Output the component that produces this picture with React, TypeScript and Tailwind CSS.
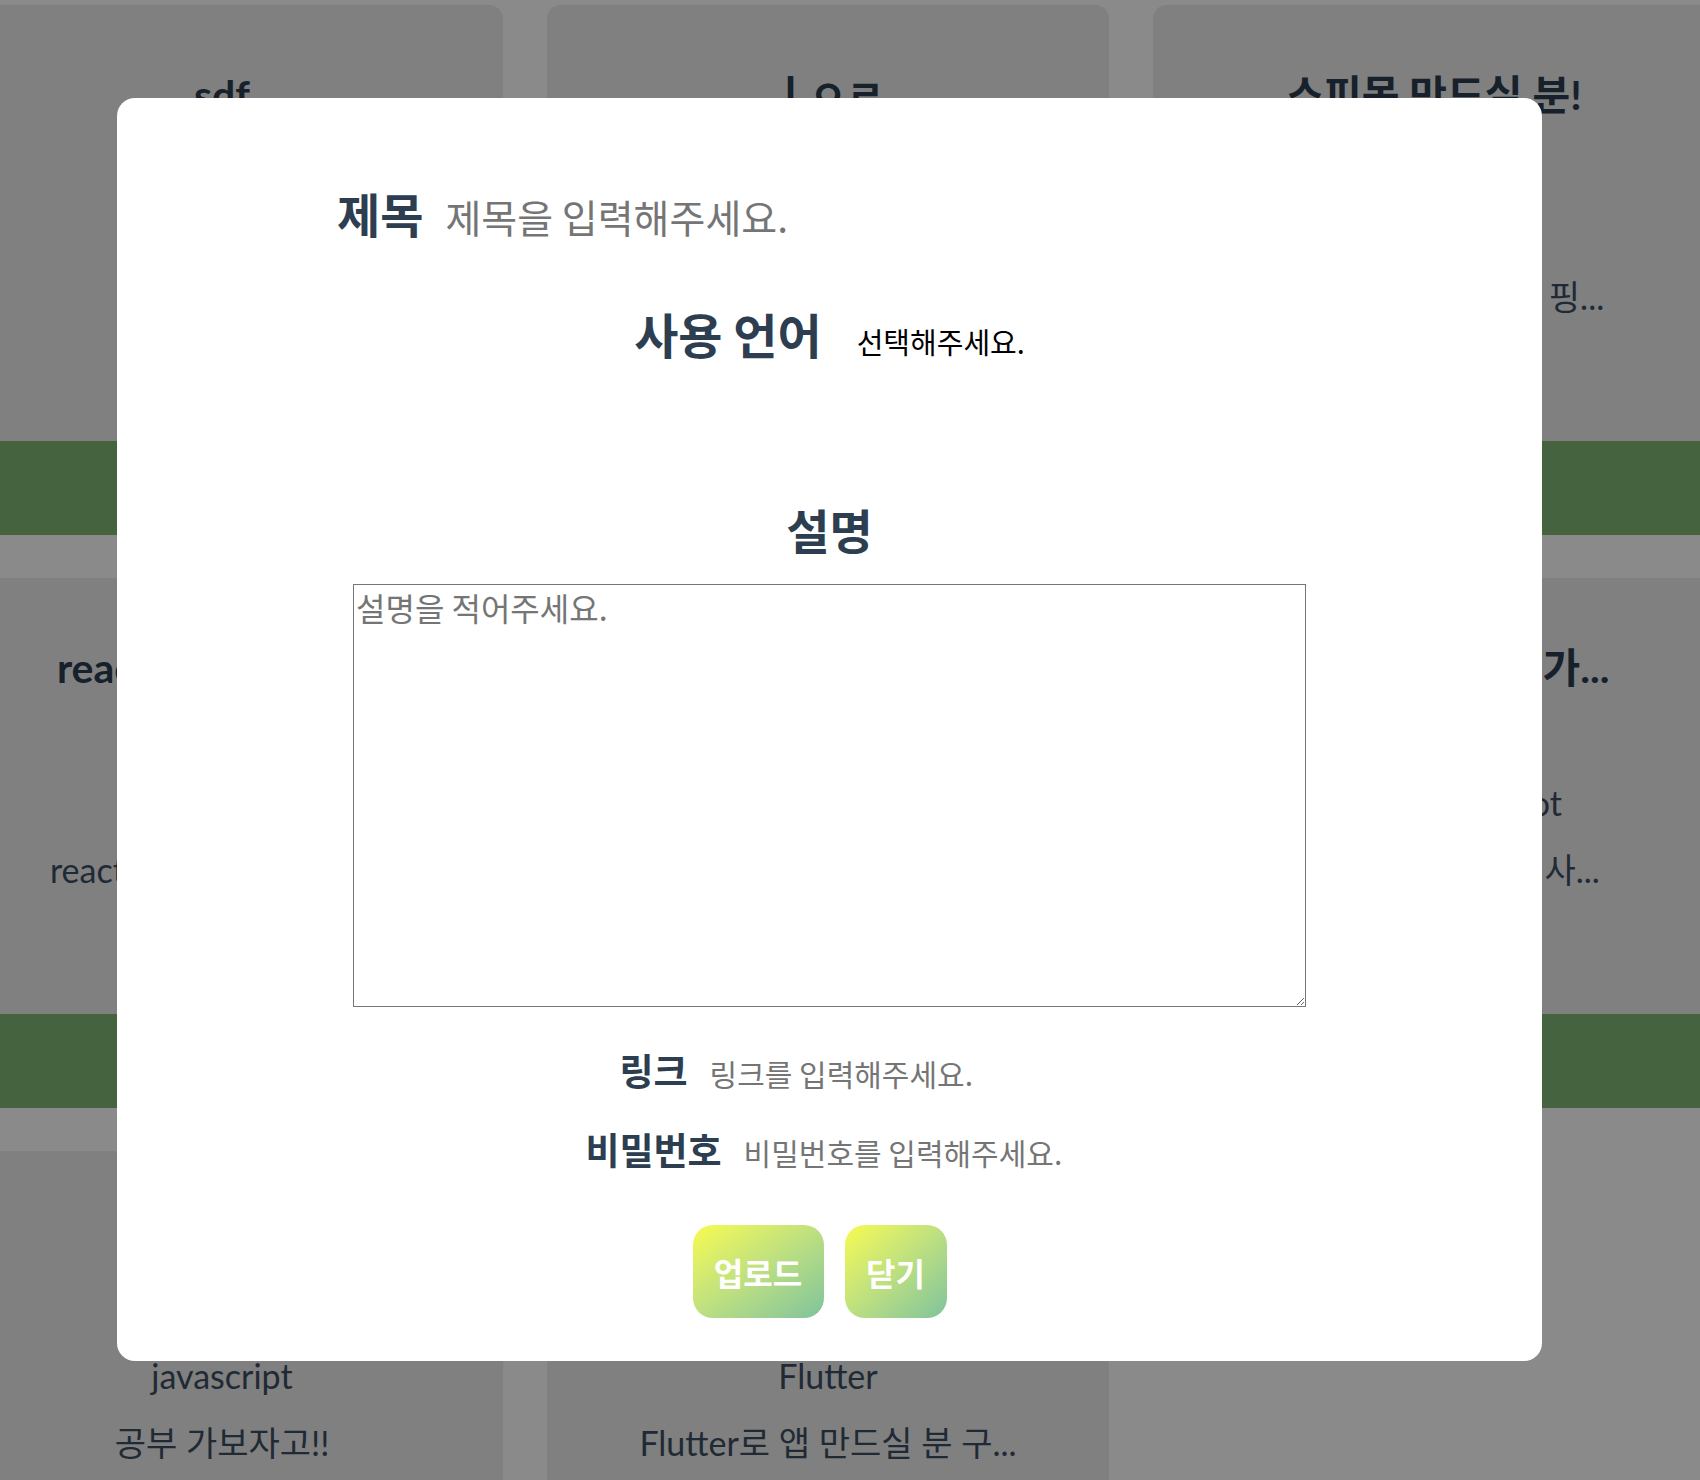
import * as React from 'react';

type CardData = { title: string; lang: string; desc: string };

// 모달에 가려진 카드 내용은 비워둔다
const rows: CardData[][] = [
  [
    { title: 'sdf', lang: '', desc: '' },
    { title: 'ㅣㅇㄹ', lang: '', desc: '' },
    { title: '스피몽 만드실 분!', lang: '', desc: '같이 만들어 보실 분 핑...' },
  ],
  [
    { title: 'react 스터디 구함...', lang: '', desc: 'react 같이 공부하실 분...' },
    { title: '', lang: '', desc: '' },
    { title: '알고리즘 스터디 가...', lang: 'Java, Spring Boot', desc: '백엔드 공부하실 분 사...' },
  ],
  [
    { title: '', lang: 'javascript', desc: '공부 가보자고!!' },
    { title: '', lang: 'Flutter', desc: 'Flutter로 앱 만드실 분 구...' },
  ],
];

function Card({ title, lang, desc }: CardData) {
  return (
    <div className="flex h-[530px] w-[562px] shrink-0 flex-col overflow-hidden rounded-[14px] bg-[#808080] text-center">
      <div className="flex flex-1 flex-col items-center">
        <h3 className="mt-[65px] h-[50px] whitespace-nowrap text-[41px] font-bold leading-[50px] text-[#17212b]">{title}</h3>
        <p className="mt-[88px] h-[44px] whitespace-nowrap text-[34px] leading-[44px] text-[#1f2a35]">{lang}</p>
        <p className="mt-[23px] h-[44px] whitespace-nowrap text-[34px] leading-[44px] text-[#1f2a35]">{desc}</p>
      </div>
      <div className="h-[94px] bg-[#45633f]" />
    </div>
  );
}

function UploadModal() {
  return (
    <div className="absolute left-[117px] top-[98px] flex h-[1263px] w-[1425px] flex-col items-center rounded-[18px] bg-white pt-[80px] font-['Noto_Sans_CJK_KR',sans-serif]">
      {/* 제목 */}
      <div className="flex h-[60px] w-[985px] items-baseline gap-[22px]">
        <label className="whitespace-nowrap text-[47px] font-bold text-[#2c3e50]">제목</label>
        <input
          className="min-w-0 flex-1 bg-transparent text-[39px] text-[#2c3e50] outline-none placeholder:text-[#757575]"
          placeholder="제목을 입력해주세요."
        />
      </div>

      {/* 사용 언어 */}
      <div className="mt-[59px] flex h-[60px] items-baseline gap-[35px]">
        <label className="whitespace-nowrap text-[48px] font-bold text-[#2c3e50]">사용 언어</label>
        <span className="whitespace-nowrap text-[29px] text-black">선택해주세요.</span>
      </div>

      {/* 설명 */}
      <h2 className="mt-[142px] h-[60px] text-[47px] font-bold leading-[60px] text-[#2c3e50]">설명</h2>
      <textarea
        className="mt-[25px] h-[423px] w-[953px] border border-[#767676] p-[2px] text-[32px] leading-[1.3] outline-none placeholder:text-[#757575]"
        placeholder="설명을 적어주세요."
      />

      {/* 링크 */}
      <div className="mt-[36px] flex h-[50px] items-baseline gap-[22px]">
        <label className="whitespace-nowrap text-[37px] font-bold text-[#2c3e50]">링크</label>
        <input
          className="w-[330px] bg-transparent text-[30px] outline-none placeholder:text-[#757575]"
          placeholder="링크를 입력해주세요."
        />
      </div>

      {/* 비밀번호 */}
      <div className="mt-[29px] flex h-[50px] items-baseline gap-[22px]">
        <label className="whitespace-nowrap text-[37px] font-bold text-[#2c3e50]">비밀번호</label>
        <input
          type="text"
          className="w-[330px] bg-transparent text-[30px] outline-none placeholder:text-[#757575]"
          placeholder="비밀번호를 입력해주세요."
        />
      </div>

      {/* 버튼 */}
      <div className="mt-[53px] flex gap-[21px] pr-[20px]">
        <button className="flex h-[93px] w-[131px] items-center justify-center rounded-[20px] bg-linear-to-br from-[#f8fb4b] to-[#7fc39b] text-[32px] font-bold text-white">
          업로드
        </button>
        <button className="flex h-[93px] w-[102px] items-center justify-center rounded-[20px] bg-linear-to-br from-[#f8fb4b] to-[#7fc39b] text-[32px] font-bold text-white">
          닫기
        </button>
      </div>
    </div>
  );
}

export default function App() {
  return (
    <div className="relative h-[1480px] w-full overflow-hidden bg-[#8a8a8a] font-['Lato','Noto_Sans_CJK_KR',sans-serif]">
      <div className="flex flex-col gap-[43px] pt-[5px]">
        {rows.map((row, i) => (
          <div key={i} className="-ml-[59px] flex gap-[44px]">
            {row.map((card, j) => (
              <Card key={j} {...card} />
            ))}
          </div>
        ))}
      </div>
      <UploadModal />
    </div>
  );
}
